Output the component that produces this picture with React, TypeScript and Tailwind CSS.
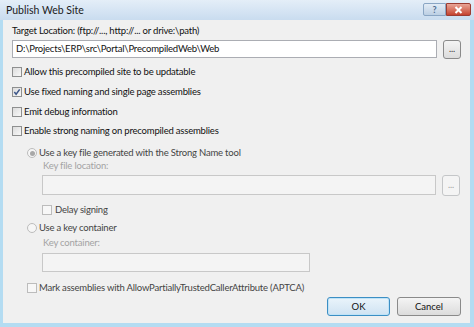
import React from "react";

const font = "font-['Lato',_'Noto_Sans',_sans-serif]";

function CheckBox({ checked = false, disabled = false }: { checked?: boolean; disabled?: boolean }) {
  return (
    <div
      className={
        "w-[10px] h-[10px] shrink-0 border flex items-center justify-center " +
        (disabled
          ? "border-[#bcbcbc] bg-[#f7f7f7]"
          : "border-[#8e8f8f] bg-gradient-to-br from-[#dcdcdc] to-[#f8f8f8]")
      }
    >
      {checked && (
        <svg width="8" height="8" viewBox="0 0 9 9">
          <path d="M1.5 4.5 L3.5 7 L7.5 1.5" fill="none" stroke="#3d5689" strokeWidth="1.7" />
        </svg>
      )}
    </div>
  );
}

function Radio({ checked = false }: { checked?: boolean }) {
  return (
    <div className="w-[10px] h-[10px] shrink-0 rounded-full border border-[#bcbcbc] bg-[#f6f6f6] flex items-center justify-center">
      {checked && <div className="w-[5px] h-[5px] rounded-full bg-[#a8a8a8]" />}
    </div>
  );
}

function DotsButton({ disabled = false, h = "h-[19px]" }: { disabled?: boolean; h?: string }) {
  return (
    <div
      className={
        "w-[18px] " +
        h +
        " rounded-[3px] border flex items-center justify-center text-[9px] leading-none " +
        (disabled
          ? "border-[#c4c6c8] bg-[#f4f4f4] text-[#a0a0a0]"
          : "border-[#8a8a8a] bg-gradient-to-b from-[#f4f4f4] to-[#dcdcdc] text-[#333]")
      }
    >
      <span className="-mt-[3px]">...</span>
    </div>
  );
}

export default function App() {
  return (
    <div className={"w-[474px] h-[327px] flex flex-col bg-[#b4dcf2] " + font}>
      {/* title bar */}
      <div className="h-[20px] shrink-0 flex items-center bg-gradient-to-b from-[#e4eef8] to-[#c9dcef] pl-[6px] pr-[3px]">
        <span className="text-[10.5px] text-[#1b1b1b] flex-1 leading-none">Publish Web Site</span>
        <div className="flex items-start self-start mt-[3px]">
          <div className="w-[23px] h-[13px] border border-[#8aa6c4] rounded-l-[2px] bg-gradient-to-b from-[#e2ecf6] to-[#bccfe3] flex items-center justify-center text-[9px] text-[#4d6d92] leading-none font-bold">
            ?
          </div>
          <div className="w-[25px] h-[13px] border border-[#9b3c32] rounded-r-[2px] bg-gradient-to-b from-[#e8a597] to-[#c4412e] flex items-center justify-center">
            <svg width="9" height="8" viewBox="0 0 9 8">
              <path d="M1.5 1 L7.5 7 M7.5 1 L1.5 7" stroke="#fff" strokeWidth="2" />
            </svg>
          </div>
        </div>
      </div>
      {/* body */}
      <div className="flex-1 ml-[3px] mr-[4px] mb-[4px] bg-[#f0f0f0] pl-[9px] pr-[8px] flex flex-col text-[9.5px] tracking-[-0.2px] leading-none text-[#111]">
        <div className="mt-[4px] h-[14px] flex items-center">Target Location: (ftp://..., http://... or drive:\path)</div>
        <div className="mt-[2px] h-[19px] flex items-start gap-[6px]">
          <div className="w-[425px] h-[18px] border border-[#abadb3] bg-white flex items-center pl-[3px]">
            D:\Projects\ERP\src\Portal\PrecompiledWeb\Web
          </div>
          <DotsButton />
        </div>
        <div className="mt-[6px] h-[14px] flex items-center gap-[2px]">
          <CheckBox />
          <span>Allow this precompiled site to be updatable</span>
        </div>
        <div className="mt-[6px] h-[14px] flex items-center gap-[2px]">
          <CheckBox checked />
          <span>Use fixed naming and single page assemblies</span>
        </div>
        <div className="mt-[6px] h-[14px] flex items-center gap-[2px]">
          <CheckBox />
          <span>Emit debug information</span>
        </div>
        <div className="mt-[5px] h-[14px] flex items-center gap-[2px]">
          <CheckBox />
          <span>Enable strong naming on precompiled assemblies</span>
        </div>
        <div className="pl-[15px] flex flex-col text-[#444]">
          <div className="mt-[9px] h-[12px] flex items-center gap-[2px]">
            <Radio checked />
            <span>Use a key file generated with the Strong Name tool</span>
          </div>
          <div className="pl-[15px] flex flex-col">
            <div className="h-[13px] flex items-center text-[#a3a3a3] pl-[1px]">Key file location:</div>
            <div className="mt-[3px] h-[21px] flex items-start gap-[6px]">
              <div className="w-[394px] h-[20px] border border-[#c8c8c8] bg-[#f4f4f4]" />
              <DotsButton disabled h="h-[21px]" />
            </div>
            <div className="mt-[7px] h-[14px] flex items-center gap-[3px]">
              <CheckBox disabled />
              <span>Delay signing</span>
            </div>
          </div>
          <div className="mt-[4px] h-[14px] flex items-center gap-[2px]">
            <Radio />
            <span>Use a key container</span>
          </div>
          <div className="pl-[15px] flex flex-col">
            <div className="mt-[1px] h-[14px] flex items-center text-[#a3a3a3] pl-[1px]">Key container:</div>
            <div className="mt-[3px] w-[268px] h-[19px] border border-[#c8c8c8] bg-[#f4f4f4]" />
          </div>
          <div className="mt-[9px] h-[14px] flex items-center gap-[2px]">
            <CheckBox disabled />
            <span>Mark assemblies with AllowPartiallyTrustedCallerAttribute (APTCA)</span>
          </div>
        </div>
        <div className="mt-[2px] h-[19px] flex justify-end gap-[7px] pr-[1px] tracking-normal">
          <div className="w-[63px] h-[19px] rounded-[3px] border border-[#3c8fc4] bg-gradient-to-b from-[#eaf4fb] to-[#cfe3f2] shadow-[inset_0_0_0_1px_#bfe3f7] flex items-center justify-center">
            OK
          </div>
          <div className="w-[64px] h-[19px] rounded-[3px] border border-[#8a8a8a] bg-gradient-to-b from-[#f4f4f4] to-[#dcdcdc] flex items-center justify-center">
            Cancel
          </div>
        </div>
      </div>
    </div>
  );
}
